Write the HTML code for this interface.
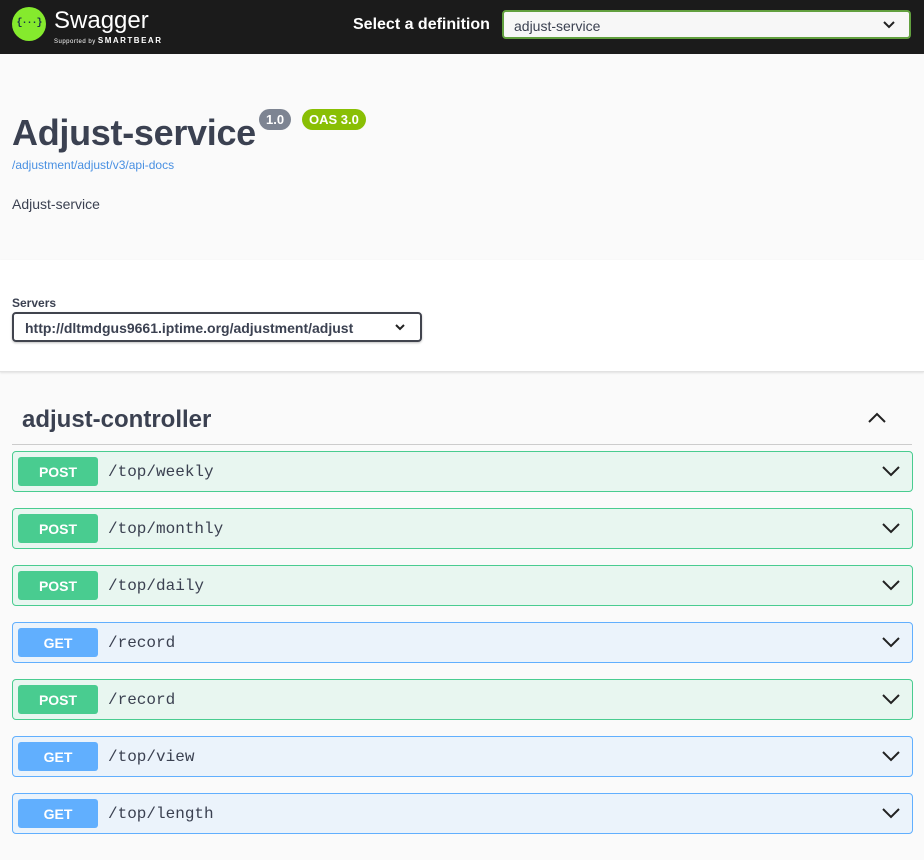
<!DOCTYPE html>
<html><head><style>
*{box-sizing:border-box;margin:0;padding:0}
body{width:924px;height:860px;overflow:hidden;background:#fafafa;font-family:"Liberation Sans",sans-serif;color:#3b4151}
.top{height:54px;background:#1b1b1b;position:relative}
.logo{position:absolute;left:12px;top:7px;width:34px;height:34px;border-radius:50%;background:#85ea2d;color:#173647;font:bold 10px "Liberation Mono",monospace;text-align:center;line-height:34px;letter-spacing:-1px}
.sw{position:absolute;left:54px;top:7px;color:#fff;font-size:24px}
.sb{position:absolute;left:54px;top:36px;color:#fff;font-size:6px;letter-spacing:.5px}
.sel-l{position:absolute;left:353px;top:16px;color:#fff;font-weight:bold;font-size:16px}
.sel{position:absolute;left:502px;top:10px;width:409px;height:29px;border:2px solid #62a03f;border-radius:4px;background:#f7f7f7;font-size:14px;padding:6px 10px;color:#3b4151}
.chev{position:absolute;right:14px;top:9px}
.info{height:206px;background:#fafafa;position:relative}
h1{position:absolute;left:12px;top:58px;font-size:36px;font-weight:bold;letter-spacing:-0.3px}
.badge{position:absolute;top:108px;height:21px;border-radius:11px;color:#fff;font-weight:bold;font-size:13px;line-height:21px;padding:0 7px}
.link{position:absolute;left:12px;top:104px;font-size:12px;color:#4990e2}
.desc{position:absolute;left:12px;top:142px;font-size:14px}
.srv{height:112px;background:#fff;position:relative;border-bottom:1px solid #e2e2e2;box-shadow:0 1px 2px rgba(0,0,0,.1)}
.srv .l{position:absolute;left:12px;top:36px;font-size:12px;font-weight:bold}
.srv .s{position:absolute;left:12px;top:52px;width:410px;height:30px;border:2px solid #41444e;border-radius:4px;font-size:14px;font-weight:bold;padding:6px 11px;box-shadow:0 1px 2px rgba(0,0,0,.25)}
.tag{position:absolute;left:22px;top:406px;font-size:24px;font-weight:bold}
.tline{position:absolute;left:12px;top:444px;width:900px;border-top:1px solid #ccc}
.op{position:absolute;left:12px;width:901px;height:41px;border:1px solid;border-radius:4px}
.post{background:#e8f6f0;border-color:#49cc90}
.get{background:#ebf3fb;border-color:#61affe}
.m{position:absolute;left:5px;top:5px;width:80px;height:29px;border-radius:3px;color:#fff;font-weight:bold;font-size:14px;text-align:center;line-height:30px}
.post .m{background:#49cc90}.get .m{background:#61affe}
.p{position:absolute;left:95px;top:11px;font:16px "Liberation Mono",monospace;color:#3b4151}
.op svg{position:absolute;right:12px;top:13px}
</style></head><body>
<div class="top"><div class="logo">{···}</div><div class="sw">Swagger</div><div class="sb">Supported by <b style="font-size:8px;letter-spacing:1.5px">SMARTBEAR</b></div>
<div class="sel-l">Select a definition</div><div class="sel">adjust-service<svg class="chev" width="12" height="8" viewBox="0 0 12 8"><path d="M1 1l5 5 5-5" stroke="#222" stroke-width="2" fill="none"/></svg></div></div>
<div class="info"><h1>Adjust-service</h1><span class="badge" style="left:259px;top:55px;background:#7d8492">1.0</span><span class="badge" style="left:302px;top:55px;background:#89bf04">OAS 3.0</span>
<div class="link">/adjustment/adjust/v3/api-docs</div><div class="desc">Adjust-service</div></div>
<div class="srv"><div class="l">Servers</div><div class="s">http://dltmdgus9661.iptime.org/adjustment/adjust<svg style="position:absolute;right:15px;top:10px" width="10" height="7" viewBox="0 0 10 7"><path d="M1 1l4 4 4-4" stroke="#222" stroke-width="2" fill="none"/></svg></div></div>
<div class="tag">adjust-controller</div>
<svg style="position:absolute;left:868px;top:412px" width="18" height="12" viewBox="0 0 18 12"><path d="M1 10l8-8 8 8" stroke="#222" stroke-width="2" fill="none"/></svg>
<div class="tline"></div>
<div class="op post" style="top:451px"><div class="m">POST</div><div class="p">/top/weekly</div><svg width="18" height="12" viewBox="0 0 18 12"><path d="M1 2l8 8 8-8" stroke="#222" stroke-width="2" fill="none"/></svg></div>
<div class="op post" style="top:508px"><div class="m">POST</div><div class="p">/top/monthly</div><svg width="18" height="12" viewBox="0 0 18 12"><path d="M1 2l8 8 8-8" stroke="#222" stroke-width="2" fill="none"/></svg></div>
<div class="op post" style="top:565px"><div class="m">POST</div><div class="p">/top/daily</div><svg width="18" height="12" viewBox="0 0 18 12"><path d="M1 2l8 8 8-8" stroke="#222" stroke-width="2" fill="none"/></svg></div>
<div class="op get" style="top:622px"><div class="m">GET</div><div class="p">/record</div><svg width="18" height="12" viewBox="0 0 18 12"><path d="M1 2l8 8 8-8" stroke="#222" stroke-width="2" fill="none"/></svg></div>
<div class="op post" style="top:679px"><div class="m">POST</div><div class="p">/record</div><svg width="18" height="12" viewBox="0 0 18 12"><path d="M1 2l8 8 8-8" stroke="#222" stroke-width="2" fill="none"/></svg></div>
<div class="op get" style="top:736px"><div class="m">GET</div><div class="p">/top/view</div><svg width="18" height="12" viewBox="0 0 18 12"><path d="M1 2l8 8 8-8" stroke="#222" stroke-width="2" fill="none"/></svg></div>
<div class="op get" style="top:793px"><div class="m">GET</div><div class="p">/top/length</div><svg width="18" height="12" viewBox="0 0 18 12"><path d="M1 2l8 8 8-8" stroke="#222" stroke-width="2" fill="none"/></svg></div>
</body></html>
